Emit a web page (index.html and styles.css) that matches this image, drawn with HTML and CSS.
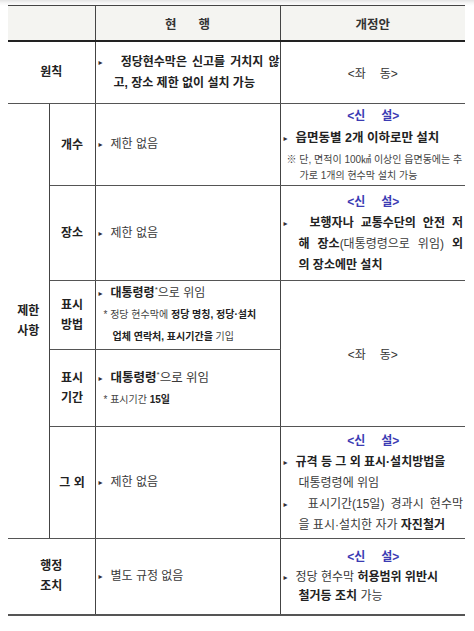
FILE: index.html
```html
<!DOCTYPE html>
<html lang="ko">
<head>
<meta charset="utf-8">
<link rel="stylesheet" href="styles.css">
</head>
<body>
<table class="tbl">
  <colgroup><col class="c1"><col class="c2"><col class="c3"><col class="c4"></colgroup>
  <thead>
    <tr class="rh">
      <th colspan="2" class="first"></th>
      <th>현<span class="gap"></span>행</th>
      <th>개정안</th>
    </tr>
  </thead>
  <tbody>
    <tr class="r1">
      <td colspan="2" class="first lbl">원칙</td>
      <td class="cur">
        <div class="item ml b">
          <span class="jline fl"><span class="blt">▸</span>&nbsp;&nbsp;정당현수막은 신고를 거치지 않</span>
          <span class="pline">고, 장소 제한 없이 설치 가능</span>
        </div>
      </td>
      <td class="ctr">&lt;좌<span class="gap2"></span>동&gt;</td>
    </tr>
    <tr class="r2">
      <td rowspan="5" class="first lbl grp">제한<br>사항</td>
      <td class="lbl">개수</td>
      <td class="cur"><div class="item"><span class="blt">▸</span>제한 없음</div></td>
      <td class="new">
        <div class="sin">&lt;신<span class="gap3"></span>설&gt;</div>
        <div class="item b big"><span class="blt">▸</span>읍면동별 2개 이하로만 설치</div>
        <div class="note n1">
          <span class="pline">※ 단, 면적이 100㎢ 이상인 읍면동에는 추</span>
          <span class="pline ind">가로 1개의 현수막 설치 가능</span>
        </div>
      </td>
    </tr>
    <tr class="r3">
      <td class="lbl">장소</td>
      <td class="cur"><div class="item"><span class="blt">▸</span>제한 없음</div></td>
      <td class="new">
        <div class="sin">&lt;신<span class="gap3"></span>설&gt;</div>
        <div class="item ml b lh21">
          <span class="jline fl"><span class="blt">▸</span>&nbsp;&nbsp;보행자나 교통수단의 안전 저</span>
          <span class="jline">해 장소<span class="r">(대통령령으로 위임)</span> 외</span>
          <span class="pline">의 장소에만 설치</span>
        </div>
      </td>
    </tr>
    <tr class="r4">
      <td class="lbl">표시<br>방법</td>
      <td class="cur">
        <div class="item"><span class="blt">▸</span><b>대통령령</b><sup>*</sup>으로 위임</div>
        <div class="note n2">
          <span class="pline">* 정당 현수막에 <b>정당 명칭, 정당·설치</b></span>
          <span class="pline ind2"><b>업체 연락처, 표시기간을</b> 기입</span>
        </div>
      </td>
      <td rowspan="2" class="ctr">&lt;좌<span class="gap2"></span>동&gt;</td>
    </tr>
    <tr class="r5">
      <td class="lbl">표시<br>기간</td>
      <td class="cur">
        <div class="item big"><span class="blt">▸</span><b>대통령령</b><sup>*</sup>으로 위임</div>
        <div class="note n3">* 표시기간 <b>15일</b></div>
      </td>
    </tr>
    <tr class="r6">
      <td class="lbl">그 외</td>
      <td class="cur"><div class="item"><span class="blt">▸</span>제한 없음</div></td>
      <td class="new">
        <div class="sin">&lt;신<span class="gap3"></span>설&gt;</div>
        <div class="item ml lh21">
          <span class="pline fl b"><span class="blt">▸</span>규격 등 그 외 표시·설치방법을</span>
          <span class="pline">대통령령에 위임</span>
          <span class="jline fl"><span class="blt">▸</span>&nbsp;&nbsp;표시기간(15일) 경과시 현수막</span>
          <span class="pline">을 표시·설치한 자가 <b>자진철거</b></span>
        </div>
      </td>
    </tr>
    <tr class="r7 last">
      <td colspan="2" class="first lbl">행정<br>조치</td>
      <td class="cur"><div class="item"><span class="blt">▸</span>별도 규정 없음</div></td>
      <td class="new">
        <div class="sin">&lt;신<span class="gap3"></span>설&gt;</div>
        <div class="item ml lh19">
          <span class="pline fl"><span class="blt">▸</span>정당 현수막 <b>허용범위 위반시</b></span>
          <span class="pline"><b>철거등 조치</b> 가능</span>
        </div>
      </td>
    </tr>
  </tbody>
</table>
</body>
</html>
```

FILE: styles.css
```css
html, body {
  margin: 0;
  padding: 0;
}
html {
  background: linear-gradient(#e4e4e4 0, #f6f6f6 3px, #ffffff 6px);
  min-height: 100%;
}
body {
  padding: 5px 0 0 8px;
  font-family: "Liberation Sans", "Noto Sans CJK KR", sans-serif;
  font-size: 12px;
  color: #3a3a3a;
}
.tbl {
  border-collapse: collapse;
  table-layout: fixed;
  width: 457px;
  background: #ffffff;
}
.c1 { width: 41px; }
.c2 { width: 46px; }
.c3 { width: 185px; }
.c4 { width: 185px; }

th, td {
  border-left: 1px solid #444;
  border-bottom: 1px solid #555;
  padding: 0;
  vertical-align: middle;
  overflow: hidden;
}
th.first, td.first { border-left: none; }
th {
  background: #f4f4f1;
  border-top: 1px solid #444;
  border-bottom: 2px solid #222;
  font-weight: 700;
  font-size: 12.5px;
  color: #333;
  text-align: center;
  padding-top: 2px;
}
tr.last td { border-bottom: 2px solid #555; }

.rh { height: 35px; }
.r1 { height: 63px; }
.r2 { height: 82px; }
.r3 { height: 95px; }
.r4 { height: 69px; }
.r5 { height: 77px; }
.r6 { height: 112px; }
.r7 { height: 76px; }

.gap { display: inline-block; width: 22px; }
.gap2 { display: inline-block; width: 14px; }
.gap3 { display: inline-block; width: 16px; }

.lbl {
  text-align: center;
  font-weight: 700;
  color: #222;
  line-height: 20px;
}
.grp { border-right: 1px solid #444; }

.ctr {
  text-align: center;
  color: #333;
}

.cur { padding-left: 3px; padding-right: 0; }
.new { padding-left: 3px; padding-right: 2px; }

.item {
  padding-left: 15px;
  text-indent: -15px;
  line-height: 20px;
}
.item.ml { text-indent: 0; }
.item.b, .b { font-weight: 700; color: #222; }
.item b, .note b { font-weight: 700; color: #222; }
.item .r { font-weight: 400; color: #3a3a3a; }
.item.big { font-size: 12.5px; line-height: 22px; }
.blt {
  display: inline-block;
  width: 12px;
  text-indent: 0;
  font-size: 8px;
  font-family: "DejaVu Sans", sans-serif;
  font-weight: 400;
  color: #333;
  vertical-align: 1px;
}
sup { font-size: 8px; vertical-align: 5px; line-height: 0; }

.lh21 { line-height: 21px; }
.lh19 { line-height: 19px; }
.jline, .pline {
  display: block;
  white-space: nowrap;
}
.jline {
  text-align: justify;
  text-align-last: justify;
  white-space: normal;
}
.fl { margin-left: -15px; }

.sin {
  text-align: center;
  color: #3b3bb3;
  font-weight: 700;
  line-height: 22px;
}

.note {
  font-size: 10px;
  line-height: 16px;
  color: #444;
}
.n1 { margin-top: 2px; padding-left: 3px; }
.n1 .ind { padding-left: 13px; }
.n2 { padding-left: 5px; line-height: 22px; }
.n2 .ind2 { padding-left: 9px; }
.n3 { padding-left: 5px; line-height: 20px; }
```
